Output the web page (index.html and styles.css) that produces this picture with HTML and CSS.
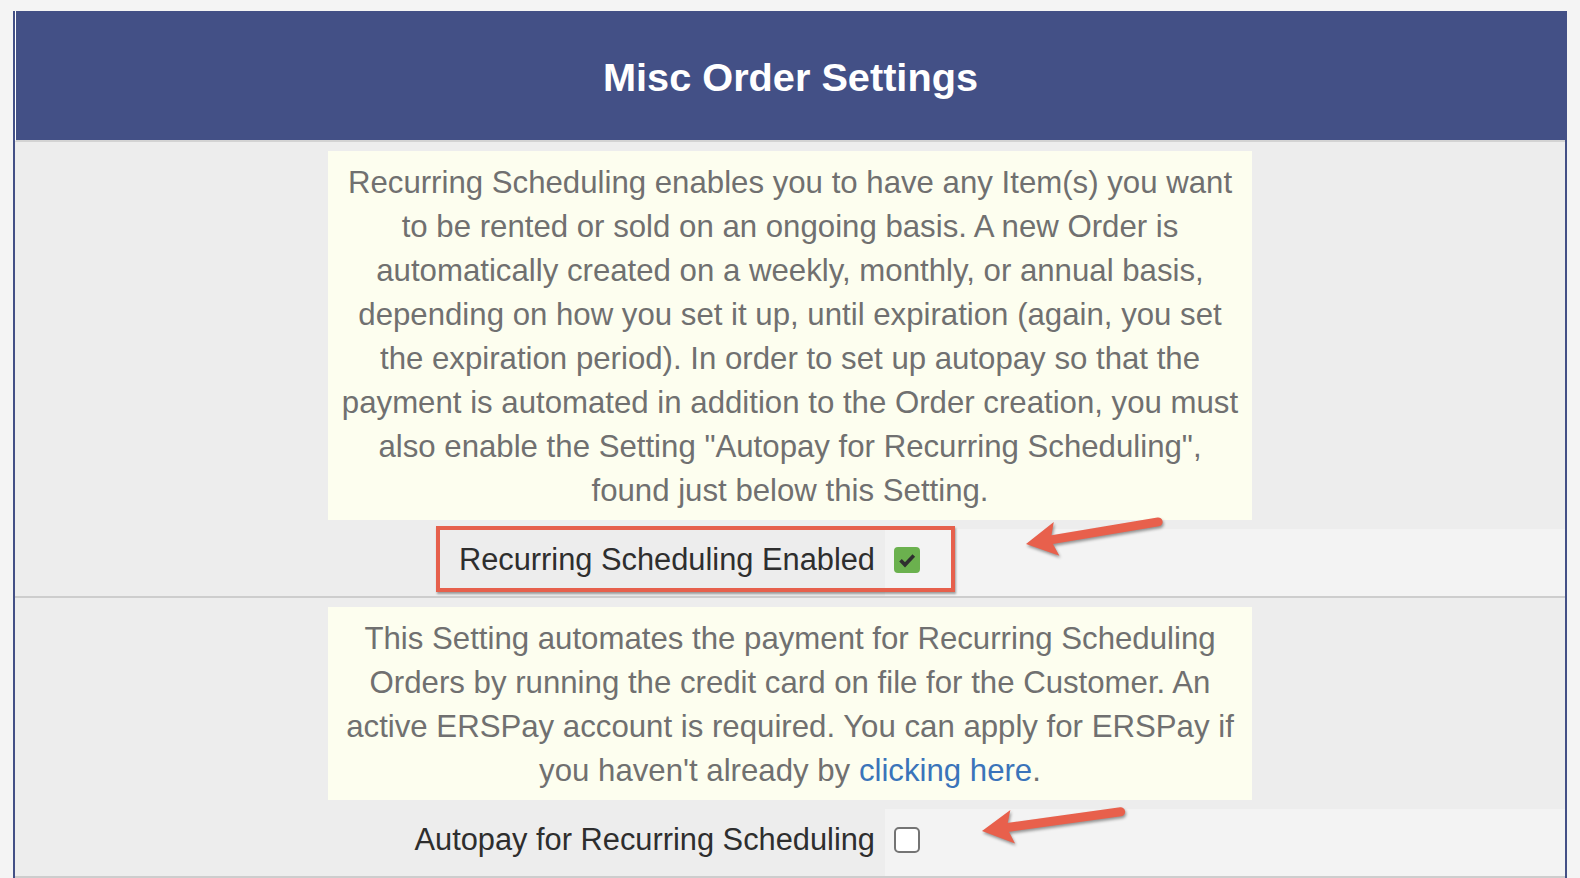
FILE: index.html
```html
<!DOCTYPE html>
<html lang="en">
<head>
    <meta charset="UTF-8">
    <meta name="viewport" content="width=device-width, initial-scale=1.0">
    <title>Misc Order Settings</title>
    <link rel="stylesheet" href="styles.css">
</head>
<body>
    <div class="panel">
        <header class="panel-head">
            <h1>Misc Order Settings</h1>
        </header>

        <section class="setting">
            <p class="setting-help">Recurring Scheduling enables you to have any Item(s) you want to be rented or sold on an ongoing basis. A new Order is automatically created on a weekly, monthly, or annual basis, depending on how you set it up, until expiration (again, you set the expiration period). In order to set up autopay so that the payment is automated in addition to the Order creation, you must also enable the Setting "Autopay for Recurring Scheduling", found just below this Setting.</p>
            <div class="setting-row">
                <label class="setting-label">Recurring Scheduling Enabled</label>
                <div class="setting-value">
                    <span class="check checked">
                        <svg width="26" height="26" viewBox="0 0 26 26"><path d="M6.5 13.2 L11 17.8 L19.8 8.6" fill="none" stroke="#2f2f2f" stroke-width="3.6"/></svg>
                    </span>
                </div>
                <div class="callout-box"></div>
                <svg class="callout-arrow arrow-one" width="180" height="64" viewBox="0 0 180 64">
                    <g transform="translate(11 39) rotate(-9.5)">
                        <line x1="22" y1="0" x2="134" y2="0" stroke="#e8604c" stroke-width="9" stroke-linecap="round"/>
                        <path d="M0 0 L31 -17 L25 0 L31 17 Z" fill="#e8604c"/>
                    </g>
                </svg>
            </div>
        </section>

        <section class="setting">
            <p class="setting-help">This Setting automates the payment for Recurring Scheduling Orders by running the credit card on file for the Customer. An active ERSPay account is required. You can apply for ERSPay if you haven't already by <a href="#">clicking here</a>.</p>
            <div class="setting-row">
                <label class="setting-label">Autopay for Recurring Scheduling</label>
                <div class="setting-value">
                    <span class="check"></span>
                </div>
                <svg class="callout-arrow arrow-two" width="190" height="60" viewBox="0 0 190 60">
                    <g transform="translate(12 36) rotate(-7.9)">
                        <line x1="22" y1="0" x2="140" y2="0" stroke="#e8604c" stroke-width="9" stroke-linecap="round"/>
                        <path d="M0 0 L31 -17 L25 0 L31 17 Z" fill="#e8604c"/>
                    </g>
                </svg>
            </div>
        </section>
    </div>
</body>
</html>
```

FILE: styles.css
```css
html, body {
    overflow: hidden;
}
body {
    margin: 0;
    background-color: #f4f4f4;
    font-family: "Liberation Sans", Arial, Helvetica, sans-serif;
}
.panel {
    margin: 11px 13px 0;
    border: 2px solid #435086;
    border-top: none;
    background-color: #ededed;
}
.panel-head {
    background-color: #435086;
    border-left: 1px solid #ffffff;
    border-bottom: 2px solid #d3d3d3;
    padding-top: 4px;
}
.panel-head h1 {
    margin: 0;
    line-height: 125px;
    font-size: 39.7px;
    font-weight: bold;
    color: #ffffff;
    text-align: center;
}
.setting {
    padding-top: 9px;
}
.setting-help {
    width: 900px;
    margin: 0 auto;
    padding: 10px 12px 7px;
    background-color: #fdfeef;
    color: #707070;
    font-size: 31.2px;
    line-height: 44px;
    text-align: center;
}
.setting-help a {
    color: #3a74ba;
    text-decoration: none;
}
.setting-row {
    position: relative;
    display: grid;
    grid-template-columns: 870px 1fr;
    height: 67px;
    margin-top: 9px;
    border-bottom: 2px solid #cdcdcd;
}
.setting-label {
    align-self: center;
    margin-bottom: 6px;
    padding-right: 10px;
    text-align: right;
    color: #2e2e2e;
    font-size: 30.8px;
}
.setting-value {
    display: flex;
    align-items: center;
    padding: 0 0 6px 9px;
    background-color: #f3f3f3;
}
.check {
    display: block;
    width: 26px;
    height: 26px;
    box-sizing: border-box;
    border: 2px solid #747474;
    border-radius: 5px;
    background-color: #ffffff;
}
.check.checked {
    border: none;
    border-radius: 4px;
    background-color: #6bb14e;
}
.check svg {
    display: block;
}
/* annotation overlays */
.callout-box {
    position: absolute;
    left: 421px;
    top: -3px;
    width: 519px;
    height: 66px;
    box-sizing: border-box;
    border: 4px solid #e6604c;
    box-shadow: 1px 2px 2px rgba(0, 0, 0, 0.35);
}
.callout-arrow {
    position: absolute;
    filter: drop-shadow(1px 2px 1.5px rgba(0, 0, 0, 0.4));
}
.arrow-one {
    left: 1000px;
    top: -24px;
}
.arrow-two {
    left: 955px;
    top: -14px;
}
```
